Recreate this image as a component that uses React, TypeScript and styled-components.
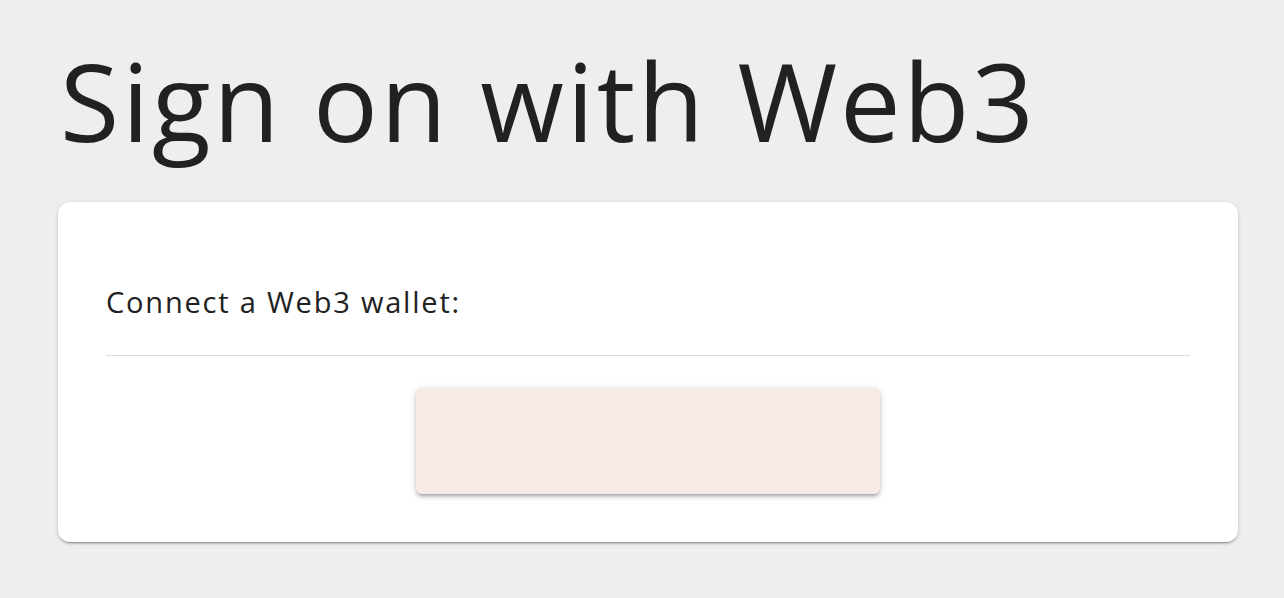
import React from 'react';
import styled, { createGlobalStyle } from 'styled-components';

const GlobalStyle = createGlobalStyle`
  html, body {
    margin: 0;
    padding: 0;
    background: #eeeeee;
  }
  body {
    font-family: 'Open Sans', 'Noto Sans', sans-serif;
    color: #212121;
  }
`;

const Page = styled.main`
  min-height: 598px;
  box-sizing: border-box;
  padding: 30px 46px 0 58px;
  display: flex;
  flex-direction: column;
`;

const Title = styled.h1`
  margin: 0 0 30px 0;
  padding-left: 2px;
  font-size: 108px;
  line-height: 142px;
  font-weight: 400;
  letter-spacing: 2.7px;
  color: #212121;
  white-space: nowrap;
`;

const Card = styled.section`
  background: #ffffff;
  border-radius: 12px;
  box-shadow: 0px 3px 1px -2px rgba(0, 0, 0, 0.2),
    0px 2px 2px 0px rgba(0, 0, 0, 0.14), 0px 1px 5px 0px rgba(0, 0, 0, 0.12);
  padding: 48px;
  display: flex;
  flex-direction: column;
`;

const Label = styled.p`
  margin: 28px 0 0 0;
  font-size: 29px;
  line-height: 48px;
  font-weight: 400;
  letter-spacing: 1.8px;
`;

const Divider = styled.hr`
  margin: 29px 0 32px 0;
  border: none;
  border-top: 1px solid #dcdcdc;
`;

const WalletButton = styled.button`
  align-self: center;
  width: 464px;
  height: 106px;
  border: none;
  border-radius: 6px;
  background: #f7e9e6;
  box-shadow: 0px 3px 3px -2px rgba(0, 0, 0, 0.25),
    0px 3px 4px 0px rgba(0, 0, 0, 0.14), 0px 1px 8px 0px rgba(0, 0, 0, 0.12);
  cursor: pointer;
`;

export default function App() {
  return (
    <>
      <GlobalStyle />
      <Page>
        <Title>Sign on with Web3</Title>
        <Card>
          <Label>Connect a Web3 wallet:</Label>
          <Divider />
          <WalletButton aria-label="Connect wallet" />
        </Card>
      </Page>
    </>
  );
}
